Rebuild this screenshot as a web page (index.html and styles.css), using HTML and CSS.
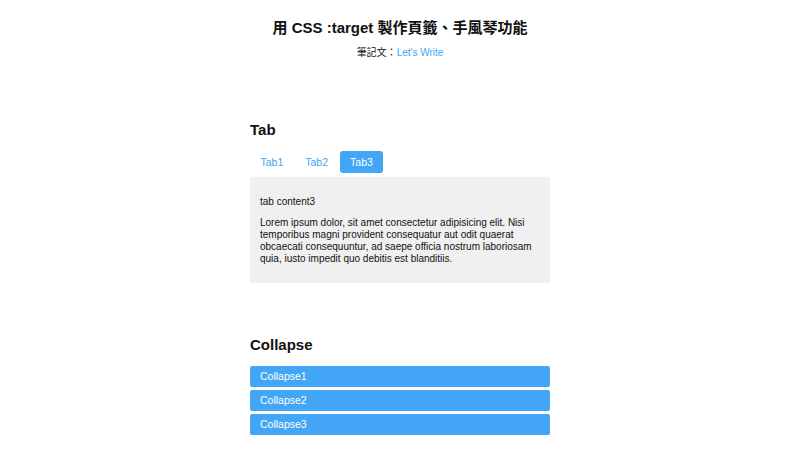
FILE: index.html
```html
<!DOCTYPE html>
<html lang="zh-Hant">
<head>
  <meta charset="UTF-8" />
  <title>用 CSS :target 製作頁籤、手風琴功能</title>
  <link rel="stylesheet" href="styles.css">
</head>
<body>
  <header class="intro">
    <h1>用 CSS :target 製作頁籤、手風琴功能</h1>
    <p>筆記文：<a href="#">Let's Write</a></p>
  </header>

  <section class="block">
    <h2>Tab</h2>
    <nav class="tabs">
      <a href="#tab1">Tab1</a>
      <a href="#tab2">Tab2</a>
      <a href="#tab3" class="active">Tab3</a>
    </nav>
    <div class="tab-content" id="tab3">
      <p>tab content3</p>
      <p>Lorem ipsum dolor, sit amet consectetur adipisicing elit. Nisi temporibus magni provident consequatur aut odit quaerat obcaecati consequuntur, ad saepe officia nostrum laboriosam quia, iusto impedit quo debitis est blanditiis.</p>
    </div>
  </section>

  <section class="block collapse">
    <h2>Collapse</h2>
    <a href="#c1" class="collapse-btn">Collapse1</a>
    <a href="#c2" class="collapse-btn">Collapse2</a>
    <a href="#c3" class="collapse-btn">Collapse3</a>
  </section>
</body>
</html>
```

FILE: styles.css
```css
body {
  font-family: "Liberation Sans", Arial, "Noto Sans CJK TC", sans-serif;
  color: #111;
  margin: 0;
  padding: 18px 0 0;
}

a {
  color: #42a5f5;
  text-decoration: none;
}

.intro {
  text-align: center;
}

.intro h1 {
  font-size: 15px;
  margin: 0;
  line-height: 20px;
}

.intro p {
  font-size: 10px;
  margin: 6px 0 0;
}

.block {
  width: 300px;
  margin: 0 auto;
  padding-top: 61px;
}

.block h2 {
  font-size: 15px;
  margin: 0 0 11px;
  line-height: 20px;
}

.tabs {
  display: flex;
  gap: 1px;
  margin-bottom: 4px;
}

.tabs a {
  font-size: 10.5px;
  line-height: 22px;
  padding: 0 10.5px;
  border-radius: 3px;
}

.tabs a.active {
  background-color: #42a5f5;
  color: #fff;
}

.tab-content {
  background-color: #f0f0f0;
  border-radius: 2px;
  padding: 19px 10px 18px;
  font-size: 10px;
  line-height: 12px;
}

.tab-content p {
  margin: 0 0 9px;
}

.tab-content p:last-child {
  margin-bottom: 0;
}

.collapse {
  padding-top: 52px;
  display: flex;
  flex-direction: column;
  gap: 3px;
}

.collapse h2 {
  margin-bottom: 8px;
}

.collapse-btn {
  display: block;
  background-color: #42a5f5;
  color: #fff;
  font-size: 10.5px;
  line-height: 21px;
  padding: 0 10px;
  border-radius: 2px;
}
```
